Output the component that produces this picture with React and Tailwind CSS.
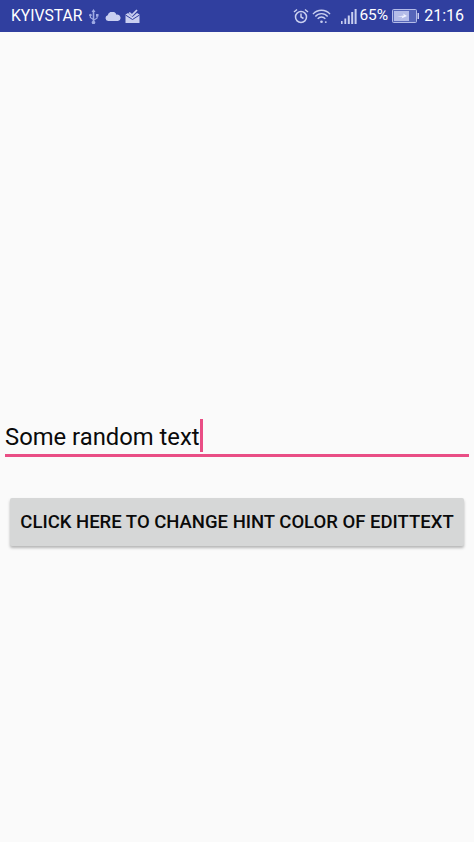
import React from "react";

export default function App() {
  return (
    <div className="w-[474px] h-[842px] bg-[#fafafa] flex flex-col font-['Roboto',sans-serif] overflow-hidden">
      <div className="h-[32px] bg-[#303f9f] flex items-center pl-[11px] pr-[10px] text-white shrink-0">
        <span className="text-[15.700px] leading-none">KYIVSTAR</span>
        <svg className="ml-[5px]" width="11" height="15" viewBox="0 0 11 15" fill="#9fabe4">
          <path d="M5.500 0L7.500 3H6.300v7.200L8.500 8.700V7.500H8V5h2.500v2.500H9.700v1.800L6.300 11.500v.6a1.700 1.700 0 1 1-1.600 0v-1.300L1.800 8.800V7.300a1.300 1.300 0 1 1 1.200 0v.9l1.700 1.200V3H3.500z" />
        </svg>
        <svg className="ml-[6px]" width="16" height="9" viewBox="0 0 16 9" fill="#c9cff0">
          <path d="M3.200 9a2.900 2.900 0 0 1-.5-5.700A4.600 4.600 0 0 1 11.500 2.700 3.200 3.200 0 0 1 13 9z" />
        </svg>
        <svg className="ml-[4px]" width="15" height="14" viewBox="0 0 15 14" fill="none">
          <path d="M0.500 5.500L3 4l4.500 4L12 4l2.500 1.500V14H0.500z" fill="#c9cff0" />
          <path d="M4.200 3.500l2.800 2.700L12 1" stroke="#c9cff0" strokeWidth="1.700" />
          <path d="M0.500 6l7 4.500 7-4.500" stroke="#303f9f" strokeWidth="1" />
        </svg>
        <div className="ml-auto flex items-center">
          <svg width="16" height="16" viewBox="0 0 16 16" fill="none" stroke="#c9cff0" strokeWidth="1.500">
            <circle cx="8" cy="9" r="5.500" />
            <path d="M8 5.500V9l2.500 1.500M1 4l3-2.500M15 4l-3-2.500" />
          </svg>
          <svg className="ml-[3px]" width="19" height="15" viewBox="0 0 20 15" fill="none" stroke="#c9cff0" strokeWidth="1.400">
            <path d="M1 5a12 12 0 0 1 18 0M3.500 7.500a8.500 8.500 0 0 1 13 0M6 10a5 5 0 0 1 8 0" />
            <circle cx="10" cy="13" r="1.400" fill="#c9cff0" stroke="none" />
            <circle cx="14.500" cy="13.400" r="1" fill="#c9cff0" stroke="none" />
          </svg>
          <svg className="ml-[10px]" width="16" height="15" viewBox="0 0 16 15" fill="#c9cff0">
            <rect x="0" y="12" width="1.600" height="3" />
            <rect x="3.400" y="9.500" width="1.800" height="5.500" />
            <rect x="6.800" y="6.500" width="2" height="8.500" />
            <rect x="10.200" y="3" width="2" height="12" />
            <rect x="13.600" y="0" width="2" height="15" />
          </svg>
          <span className="ml-[2px] text-[15.500px] leading-none">65%</span>
          <svg className="ml-[4px]" width="27" height="14" viewBox="0 0 27 14" fill="none">
            <rect x="0.500" y="0.500" width="24" height="13" rx="1" fill="#5565b8" stroke="#b4bce8" />
            <rect x="2" y="2" width="15" height="10" fill="#b4bce8" />
            <path d="M5 7.500L12 6.500L11 4.500L15 7L9.500 9.500L10.500 7.800z" fill="#f0f2ff" />
            <rect x="25.500" y="4" width="1.500" height="6" fill="#c9cff0" />
          </svg>
          <span className="ml-[5px] text-[16px] leading-none">21:16</span>
        </div>
      </div>

      <div className="flex-1 flex flex-col pt-[387px]">
        <div className="mx-[5px] h-[38px] border-b-[3px] border-[#e94e85] flex items-start">
          <span className="text-[23.800px] leading-[35px] text-[#0a0a0a] mt-[1px]">Some random text</span>
          <span className="w-[3px] h-[33px] bg-[#e94e85] shrink-0" />
        </div>
        <button className="mt-[41px] mx-[10px] h-[48px] pt-[1px] bg-[#d6d7d7] rounded-[2px] shadow-[0_2px_3px_rgba(0,0,0,0.28)] text-[#0a0a0a] text-[18.500px] font-medium leading-none flex items-center justify-center whitespace-nowrap">
          CLICK HERE TO CHANGE HINT COLOR OF EDITTEXT
        </button>
      </div>
    </div>
  );
}
